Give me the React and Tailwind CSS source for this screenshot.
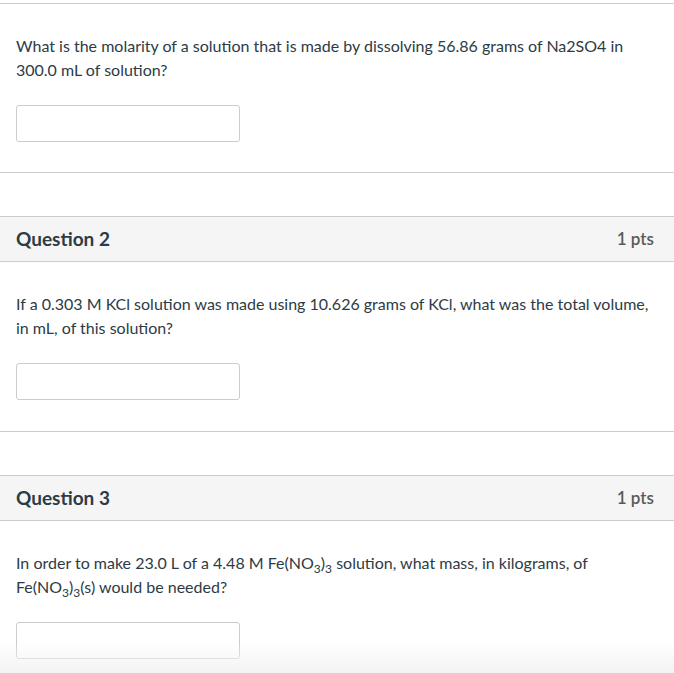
import React from "react";

const Sub = ({ children }) => (
  <span className="relative top-[4px] text-[12px] leading-none">{children}</span>
);

const questions = [
  {
    id: 1,
    text: "What is the molarity of a solution that is made by dissolving 56.86 grams of Na2SO4 in 300.0 mL of solution?",
  },
  {
    id: 2,
    title: "Question 2",
    text: "If a 0.303 M KCl solution was made using 10.626 grams of KCl, what was the total volume, in mL, of this solution?",
  },
  {
    id: 3,
    title: "Question 3",
    text: (
      <>
        In order to make 23.0 L of a 4.48 M Fe(NO<Sub>3</Sub>)<Sub>3</Sub> solution, what mass, in kilograms, of
        Fe(NO<Sub>3</Sub>)<Sub>3</Sub>(s) would be needed?
      </>
    ),
  },
];

const QuestionHeader = ({ title }) => (
  <div className="flex items-center justify-between h-[46px] px-4 bg-[#f5f5f5] border-y border-[#c7cdd1]">
    <h2 className="text-[19px] font-bold text-[#2d3b45]">{title}</h2>
    <span className="text-[17px] font-semibold text-[#5a5a5a] mr-1">1 pts</span>
  </div>
);

const QuestionBody = ({ text, first }) => (
  <div className={`px-4 pt-[30px] border-b border-[#c7cdd1] ${first ? "border-t pb-[30px]" : "pb-[31px]"}`}>
    <p className="text-[16px] leading-[24px] text-[#2d3b45]">{text}</p>
    <input
      type="text"
      className="mt-[23px] block w-[224px] h-[37px] rounded-[3px] border border-[#c7cdd1] bg-white outline-none"
    />
  </div>
);

export default function App() {
  return (
    <div className="relative w-[674px] h-[673px] overflow-hidden bg-white" style={{ fontFamily: "Lato, 'Noto Sans', sans-serif" }}>
      <div className="pt-[3px]">
        {questions.map((q, i) => (
          <div key={q.id} className={i > 0 ? "mt-[43px]" : ""}>
            {q.title && <QuestionHeader title={q.title} />}
            <QuestionBody text={q.text} first={i === 0} />
          </div>
        ))}
      </div>
      <div className="pointer-events-none absolute bottom-0 left-0 right-0 h-[30px] bg-gradient-to-b from-white/0 to-[#f3f3f3]" />
    </div>
  );
}
